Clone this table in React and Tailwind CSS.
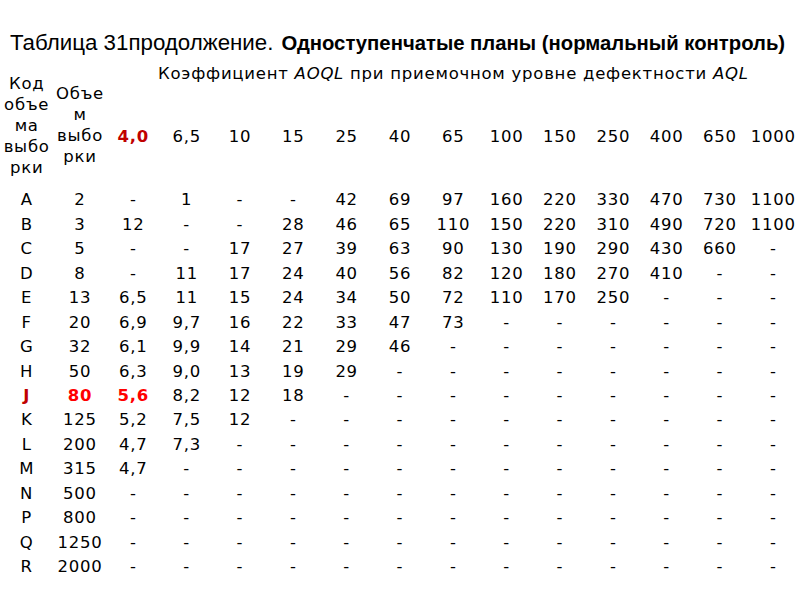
import React from "react";

const cols = ["4,0", "6,5", "10", "15", "25", "40", "65", "100", "150", "250", "400", "650", "1000"];

const rows = [
  ["A", "2", "-", "1", "-", "-", "42", "69", "97", "160", "220", "330", "470", "730", "1100"],
  ["B", "3", "12", "-", "-", "28", "46", "65", "110", "150", "220", "310", "490", "720", "1100"],
  ["C", "5", "-", "-", "17", "27", "39", "63", "90", "130", "190", "290", "430", "660", "-"],
  ["D", "8", "-", "11", "17", "24", "40", "56", "82", "120", "180", "270", "410", "-", "-"],
  ["E", "13", "6,5", "11", "15", "24", "34", "50", "72", "110", "170", "250", "-", "-", "-"],
  ["F", "20", "6,9", "9,7", "16", "22", "33", "47", "73", "-", "-", "-", "-", "-", "-"],
  ["G", "32", "6,1", "9,9", "14", "21", "29", "46", "-", "-", "-", "-", "-", "-", "-"],
  ["H", "50", "6,3", "9,0", "13", "19", "29", "-", "-", "-", "-", "-", "-", "-", "-"],
  ["J", "80", "5,6", "8,2", "12", "18", "-", "-", "-", "-", "-", "-", "-", "-", "-"],
  ["K", "125", "5,2", "7,5", "12", "-", "-", "-", "-", "-", "-", "-", "-", "-", "-"],
  ["L", "200", "4,7", "7,3", "-", "-", "-", "-", "-", "-", "-", "-", "-", "-", "-"],
  ["M", "315", "4,7", "-", "-", "-", "-", "-", "-", "-", "-", "-", "-", "-", "-"],
  ["N", "500", "-", "-", "-", "-", "-", "-", "-", "-", "-", "-", "-", "-", "-"],
  ["P", "800", "-", "-", "-", "-", "-", "-", "-", "-", "-", "-", "-", "-", "-"],
  ["Q", "1250", "-", "-", "-", "-", "-", "-", "-", "-", "-", "-", "-", "-", "-"],
  ["R", "2000", "-", "-", "-", "-", "-", "-", "-", "-", "-", "-", "-", "-", "-"],
];

export default function App() {
  return (
    <div className="w-[800px] h-[600px] bg-white text-black overflow-hidden [font-family:'DejaVu_Sans',sans-serif]">
      <div className="h-[62px] pl-[10px] pt-[31px] leading-[24px] whitespace-nowrap [font-family:'Liberation_Sans',Arial,sans-serif]">
        <span className="text-[22.3px]">Таблица 31продолжение. </span>
        <span className="text-[20.3px] font-bold ml-[2px]">
          Одноступенчатые планы (нормальный контроль)
        </span>
      </div>
      <table className="w-[800px] table-fixed border-collapse text-[16.5px] tracking-[0.75px]">
        <colgroup>
          {Array.from({ length: 15 }).map((_, i) => (
            <col key={i} className="w-[53.33px]" />
          ))}
        </colgroup>
        <thead>
          <tr className="h-[24px]">
            <th rowSpan={2} className="p-0 font-normal leading-[21px] align-middle">
              Код<br />объе<br />ма<br />выбо<br />рки
            </th>
            <th rowSpan={2} className="p-0 font-normal leading-[21px] align-middle">
              Объе<br />м<br />выбо<br />рки
            </th>
            <th colSpan={13} className="p-0 font-normal leading-[24px] whitespace-nowrap">
              Коэффициент <i>AOQL</i> при приемочном уровне дефектности <i>AQL</i>
            </th>
          </tr>
          <tr className="h-[102px]">
            {cols.map((c, i) => (
              <th
                key={c}
                className={
                  i === 0
                    ? "p-0 font-bold text-[#c00000] align-middle"
                    : "p-0 font-normal align-middle"
                }
              >
                {c}
              </th>
            ))}
          </tr>
        </thead>
        <tbody>
          {rows.map((r) => (
            <tr key={r[0]} className="h-[24.47px]">
              {r.map((v, j) => {
                let cls = "p-0 text-center leading-[24px]";
                if (r[0] === "J" && j === 0) cls += " font-bold text-[#c00000]";
                else if (r[0] === "J" && (j === 1 || j === 2)) cls += " font-bold text-[#ff0000]";
                return (
                  <td key={j} className={cls}>
                    {v}
                  </td>
                );
              })}
            </tr>
          ))}
        </tbody>
      </table>
    </div>
  );
}
